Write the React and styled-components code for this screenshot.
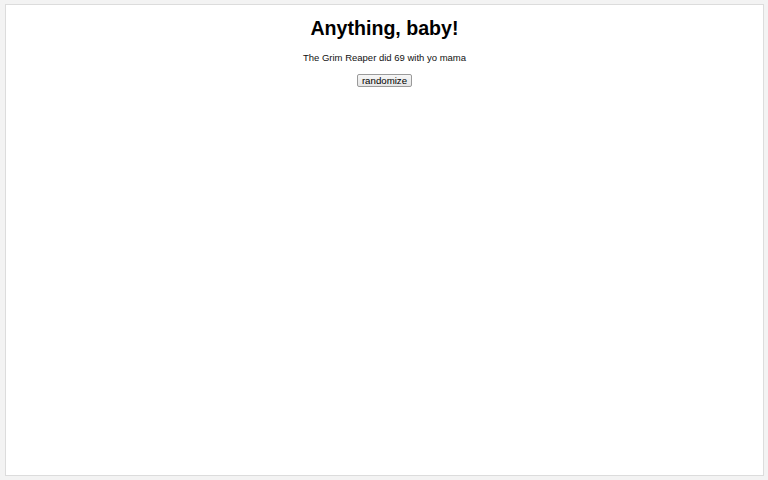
import React from "react";
import styled, { createGlobalStyle } from "styled-components";

const Global = createGlobalStyle`
  html, body { margin: 0; padding: 0; height: 100%; }
  body {
    background: #f3f3f3;
    font-family: "Liberation Sans", Arial, sans-serif;
    padding: 4px 4px 4px 5px;
    box-sizing: border-box;
  }
  #root { height: 100%; }
`;

const Card = styled.main`
  box-sizing: border-box;
  height: 100%;
  background: #ffffff;
  border: 1px solid #dcdcdc;
  display: flex;
  flex-direction: column;
  align-items: center;
  padding-top: 12px;
`;

const Title = styled.h1`
  margin: 0;
  font-size: 19.6px;
  font-weight: bold;
  color: #000;
  line-height: 23px;
`;

const Line = styled.p`
  margin: 12px 0 0;
  font-size: 9.5px;
  color: #111;
  line-height: 11px;
`;

const Button = styled.button`
  margin-top: 11px;
  font-family: "Liberation Sans", Arial, sans-serif;
  font-size: 9.7px;
  line-height: 11px;
  height: 13px;
  padding: 0 4px;
  background: linear-gradient(#f6f6f6, #e6e6e6);
  border: 1px solid #9a9a9a;
  border-radius: 2px;
  color: #000;
`;

export default function App() {
  return (
    <>
      <Global />
      <Card>
        <Title>Anything, baby!</Title>
        <Line>The Grim Reaper did 69 with yo mama</Line>
        <Button>randomize</Button>
      </Card>
    </>
  );
}
